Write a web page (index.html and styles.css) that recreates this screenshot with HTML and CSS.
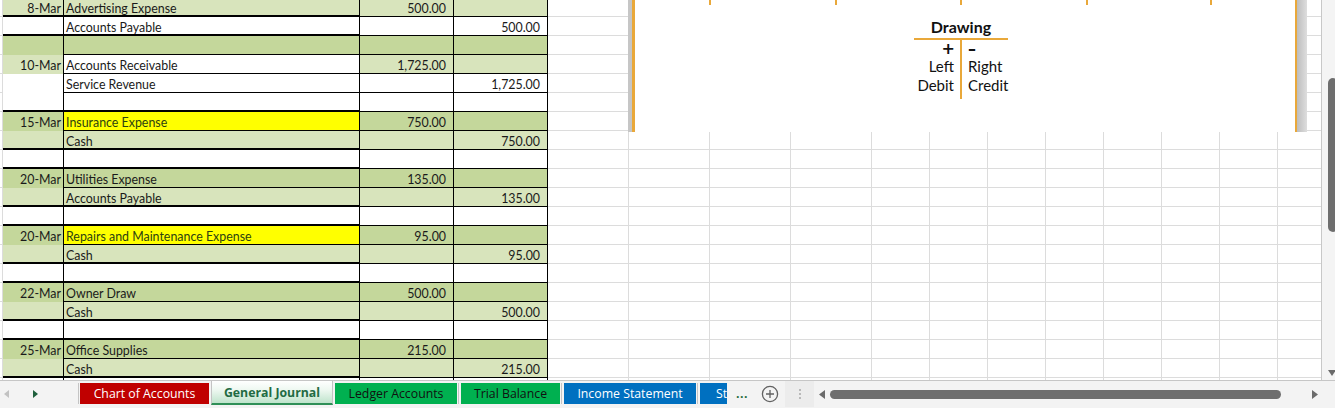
FILE: index.html
```html
<!DOCTYPE html>
<html>
<head>
<meta charset="utf-8">
<title>General Journal</title>
<link rel="stylesheet" href="styles.css">
</head>
<body>
<div class="app">
  <div class="sheet-wrap">
    <div class="sheet">
      <div class="sliver"></div>
      <div class="journal">
        <div class="row first lg thick"><div class="c date">8-Mar</div><div class="c desc">Advertising Expense</div><div class="c num">500.00</div><div class="c num"></div></div>
        <div class="row w thick"><div class="c date"></div><div class="c desc">Accounts Payable</div><div class="c num"></div><div class="c num">500.00</div></div>
        <div class="row dg thin"><div class="c date"></div><div class="c desc"></div><div class="c num"></div><div class="c num"></div></div>
        <div class="row lg thin"><div class="c date">10-Mar</div><div class="c desc bw">Accounts Receivable</div><div class="c num">1,725.00</div><div class="c num"></div></div>
        <div class="row w thin"><div class="c date"></div><div class="c desc">Service Revenue</div><div class="c num"></div><div class="c num">1,725.00</div></div>
        <div class="row w thick"><div class="c date"></div><div class="c desc"></div><div class="c num"></div><div class="c num"></div></div>
        <div class="row dg thin"><div class="c date">15-Mar</div><div class="c desc by">Insurance Expense</div><div class="c num">750.00</div><div class="c num"></div></div>
        <div class="row lg thick"><div class="c date"></div><div class="c desc">Cash</div><div class="c num"></div><div class="c num">750.00</div></div>
        <div class="row w thick"><div class="c date"></div><div class="c desc"></div><div class="c num"></div><div class="c num"></div></div>
        <div class="row dg thin"><div class="c date">20-Mar</div><div class="c desc">Utilities Expense</div><div class="c num">135.00</div><div class="c num"></div></div>
        <div class="row lg thick"><div class="c date"></div><div class="c desc">Accounts Payable</div><div class="c num"></div><div class="c num">135.00</div></div>
        <div class="row w thick"><div class="c date"></div><div class="c desc"></div><div class="c num"></div><div class="c num"></div></div>
        <div class="row dg thin"><div class="c date">20-Mar</div><div class="c desc by">Repairs and Maintenance Expense</div><div class="c num">95.00</div><div class="c num"></div></div>
        <div class="row lg thick"><div class="c date"></div><div class="c desc">Cash</div><div class="c num"></div><div class="c num">95.00</div></div>
        <div class="row w thick"><div class="c date"></div><div class="c desc"></div><div class="c num"></div><div class="c num"></div></div>
        <div class="row dg thin"><div class="c date">22-Mar</div><div class="c desc">Owner Draw</div><div class="c num">500.00</div><div class="c num"></div></div>
        <div class="row lg thick"><div class="c date"></div><div class="c desc">Cash</div><div class="c num"></div><div class="c num">500.00</div></div>
        <div class="row w thick"><div class="c date"></div><div class="c desc"></div><div class="c num"></div><div class="c num"></div></div>
        <div class="row dg thin"><div class="c date">25-Mar</div><div class="c desc">Office Supplies</div><div class="c num">215.00</div><div class="c num"></div></div>
        <div class="row lg thick"><div class="c date"></div><div class="c desc">Cash</div><div class="c num"></div><div class="c num">215.00</div></div>
        <div class="row w"><div class="c date"></div><div class="c desc"></div><div class="c num"></div><div class="c num"></div></div>
      </div>
      <div class="col w81"></div>
      <div class="col w81"></div>
      <div class="col w81"></div>
      <div class="col w81"></div>
      <div class="col w58"></div>
      <div class="col w58"></div>
      <div class="col w58"></div>
      <div class="col w58"></div>
      <div class="col w58"></div>
      <div class="col w58"></div>
      <div class="col w58"></div>
      <div class="col last"></div>

      <div class="picture">
        <div class="pic-shade-l"></div>
        <div class="pic-edge-l"></div>
        <div class="pic-body">
          <span class="tick t1"></span>
          <span class="tick t2"></span>
          <span class="tick t3"></span>
          <span class="tick t4"></span>
          <span class="tick t5"></span>
          <div class="taccount">
            <div class="t-title">Drawing</div>
            <div class="t-body">
              <div class="t-side t-left">
                <div class="t-sign">+</div>
                <div class="t-line">Left</div>
                <div class="t-line">Debit</div>
              </div>
              <div class="t-side t-right">
                <div class="t-sign">–</div>
                <div class="t-line">Right</div>
                <div class="t-line">Credit</div>
              </div>
            </div>
          </div>
        </div>
        <div class="pic-edge-r"></div>
        <div class="pic-shade-r"></div>
      </div>
    </div>
    <div class="vscroll">
      <div class="vthumb"></div>
      <svg class="vdown" width="8" height="7" viewBox="0 0 8 7"><path d="M0 0 H8 L4 6 Z" fill="#6b6b6b"/></svg>
    </div>
  </div>

  <div class="tabbar">
    <div class="nav">
      <svg class="nav-prev" width="5" height="8" viewBox="0 0 5 8"><path d="M5 0 V8 L0 4 Z" fill="#c2c2c2"/></svg>
      <svg class="nav-next" width="5" height="8" viewBox="0 0 5 8"><path d="M0 0 V8 L5 4 Z" fill="#1f5f3c"/></svg>
    </div>
    <div class="tab red wchart">Chart of Accounts</div>
    <div class="tab active wgj">General Journal</div>
    <div class="tab green wledger">Ledger Accounts</div>
    <div class="sep"></div>
    <div class="tab green wtrial">Trial Balance</div>
    <div class="sep"></div>
    <div class="tab blue wincome">Income Statement</div>
    <div class="sep"></div>
    <div class="tab blue wst">St</div>
    <div class="more">...</div>
    <svg class="add" width="18" height="18" viewBox="0 0 18 18"><circle cx="9" cy="9" r="7.6" fill="none" stroke="#616161" stroke-width="1.3"/><path d="M9 5 V13 M5 9 H13" stroke="#616161" stroke-width="1.3"/></svg>
    <div class="splitter"><span></span><span></span><span></span></div>
    <div class="hscroll">
      <svg width="6" height="9" viewBox="0 0 6 9"><path d="M6 0 V9 L0 4.5 Z" fill="#6b6b6b"/></svg>
      <div class="hthumb"></div>
      <svg class="hright" width="6" height="9" viewBox="0 0 6 9"><path d="M0 0 V9 L6 4.5 Z" fill="#6b6b6b"/></svg>
    </div>
  </div>
</div>
</body>
</html>
```

FILE: styles.css
```css
html, body {
  margin: 0;
  padding: 0;
}
body {
  width: 1335px;
  height: 410px;
  overflow: hidden;
  background: #ffffff;
  font-family: Lato, "Liberation Sans", sans-serif;
  color: #1a1a1a;
}
.app {
  display: flex;
  flex-direction: column;
  height: 410px;
}

/* ---------- sheet ---------- */
.sheet-wrap {
  display: flex;
  height: 380px;
  flex: none;
}
.sheet {
  position: relative;
  width: 1322px;
  height: 380px;
  overflow: hidden;
  display: flex;
  align-items: stretch;
  background-color: #ffffff;
  background-image: linear-gradient(to bottom, #dcdcdc 0, #dcdcdc 1px, transparent 1px);
  background-size: 100% 19px;
  background-position: 0 16px;
}
.sliver {
  flex: none;
  width: 3px;
  box-sizing: border-box;
  border-right: 1px solid #dcdcdc;
}
.journal {
  flex: none;
  width: 545px;
}
.row {
  display: grid;
  grid-template-columns: 61px 296px 94px 94px;
  height: 19px;
}
.row.first {
  height: 17px;
}
.c {
  box-sizing: border-box;
  border-right: 1px solid #000;
  font-size: 12.4px;
  line-height: 14px;
  padding-top: 4px;
  white-space: nowrap;
  overflow: hidden;
}
.row.first .c {
  padding-top: 2px;
}
.date {
  text-align: right;
  padding-right: 2px;
}
.desc {
  padding-left: 2px;
}
.num {
  text-align: right;
  padding-right: 7px;
  border-bottom: 1px solid #000;
}
.row.thick .date,
.row.thick .desc {
  border-bottom: 2px solid #000;
}
.row.thin .desc {
  border-bottom: 1px solid #000;
}
.row.lg .c { background: #d8e4bc; }
.row.dg .c { background: #c4d79b; }
.row.w .c { background: #ffffff; }
.row .c.bw { background: #ffffff; }
.row .c.by { background: #ffff00; color: #2c4210; }

.col {
  flex: none;
  box-sizing: border-box;
  border-right: 1px solid #dcdcdc;
}
.w81 { width: 81px; }
.w58 { width: 58px; }
.col.last {
  width: 44px;
  border-right-color: #c8c8c8;
}

/* ---------- floating picture ---------- */
.picture {
  position: absolute;
  left: 628px;
  top: 0;
  width: 679px;
  height: 132px;
  display: flex;
  background: #ffffff;
}
.pic-shade-l {
  width: 4px;
  background: #c6c6c6;
}
.pic-edge-l {
  width: 3px;
  background: #e9a83a;
}
.pic-body {
  flex: 1;
  position: relative;
  background: #ffffff;
}
.pic-edge-r {
  width: 2px;
  background: #e9a83a;
}
.pic-shade-r {
  width: 10px;
  background: linear-gradient(to right, #bdbdbd, #dedede);
}
.tick {
  position: absolute;
  top: 0;
  width: 2px;
  height: 5px;
  background: #e9a83a;
}
.t1 { left: 74px; }
.t2 { left: 200px; }
.t3 { left: 325px; }
.t4 { left: 451px; }
.t5 { left: 575px; }

.taccount {
  position: absolute;
  left: 279px;
  top: 17px;
  width: 94px;
  color: #111;
}
.t-title {
  font-weight: 700;
  font-size: 16px;
  line-height: 20px;
  text-align: center;
  margin-bottom: 1px;
}
.t-body {
  display: grid;
  grid-template-columns: 48px 46px;
  border-top: 2px solid #e9a83a;
  font-size: 15px;
}
.t-side {
  padding-bottom: 4px;
}
.t-left {
  box-sizing: border-box;
  border-right: 2px solid #e9a83a;
  text-align: right;
  padding-right: 6px;
}
.t-right {
  text-align: left;
  padding-left: 6px;
}
.t-sign {
  font-family: "DejaVu Sans", sans-serif;
  font-weight: 700;
  font-size: 16px;
  line-height: 17px;
}
.t-left .t-sign {
  margin-right: -1px;
}
.t-line {
  line-height: 19px;
}

/* ---------- vertical scrollbar ---------- */
.vscroll {
  flex: none;
  width: 13px;
  height: 380px;
  background: #f4f4f4;
  overflow: hidden;
  display: flex;
  flex-direction: column;
}
.vthumb {
  flex: none;
  margin: 78px 0 0 6px;
  width: 10px;
  height: 154px;
  border-radius: 5px;
  background: #6e6e6e;
}
.vdown {
  margin: auto 0 3px 6px;
  flex: none;
}

/* ---------- sheet tabs ---------- */
.tabbar {
  flex: none;
  height: 28px;
  box-sizing: border-box;
  border-top: 1px solid #c6c6c6;
  background: #f3f3f3;
  display: flex;
  align-items: flex-start;
  font-family: "Open Sans", "Noto Sans", sans-serif;
  font-size: 12.3px;
}
.nav {
  flex: none;
  width: 79px;
  height: 21px;
  margin-top: 2px;
  box-sizing: border-box;
  border-right: 1px solid #c4c4c4;
  display: flex;
  align-items: center;
}
.nav-prev { margin-left: 4px; }
.nav-next { margin-left: 24px; }
.tab {
  flex: none;
  height: 21px;
  margin-top: 2px;
  line-height: 21px;
  text-align: center;
  white-space: nowrap;
  overflow: hidden;
  box-sizing: border-box;
}
.wchart { width: 129px; margin-left: 1px; }
.wgj { width: 122px; margin-left: 2px; }
.wledger { width: 122px; margin-left: 2px; }
.wtrial { width: 99px; }
.wincome { width: 132px; }
.wst { width: 27px; text-align: left; padding-left: 16px; }
.tab.red { background: #c00000; color: #ffffff; }
.tab.green { background: #00b050; color: #111111; }
.tab.blue { background: #0070c0; color: #ffffff; }
.tab.active {
  margin-top: 0;
  height: 24px;
  padding-top: 1px;
  line-height: 21px;
  border-left: 1px solid #c4c4c4;
  border-right: 1px solid #c4c4c4;
  border-bottom: 2px solid #2f8f57;
  background: linear-gradient(to bottom, #ffffff 0%, #eef8f1 40%, #bfe4cc 100%);
  color: #226b43;
  font-weight: 700;
}
.sep {
  flex: none;
  width: 1px;
  height: 21px;
  margin: 2px 2px 0 1px;
  background: #c4c4c4;
}
.more {
  flex: none;
  margin: 2px 0 0 9px;
  line-height: 21px;
  color: #1e6b3c;
  font-weight: 700;
  letter-spacing: 0.5px;
}
.add {
  flex: none;
  margin: 4px 0 0 13px;
}
.splitter {
  flex: none;
  width: 29px;
  height: 26px;
  margin-left: 6px;
  background: #ececec;
  display: flex;
  flex-direction: column;
  align-items: center;
  justify-content: center;
  gap: 2px;
}
.splitter span {
  width: 2px;
  height: 2px;
  background: #a9a9a9;
  border-radius: 1px;
}
.hscroll {
  flex: 1;
  height: 26px;
  display: flex;
  align-items: center;
  padding-left: 5px;
  padding-right: 17px;
}
.hthumb {
  flex: 1;
  height: 9px;
  margin: 0 31px 0 5px;
  border-radius: 5px;
  background: #6e6e6e;
}
.hright { flex: none; }
```
